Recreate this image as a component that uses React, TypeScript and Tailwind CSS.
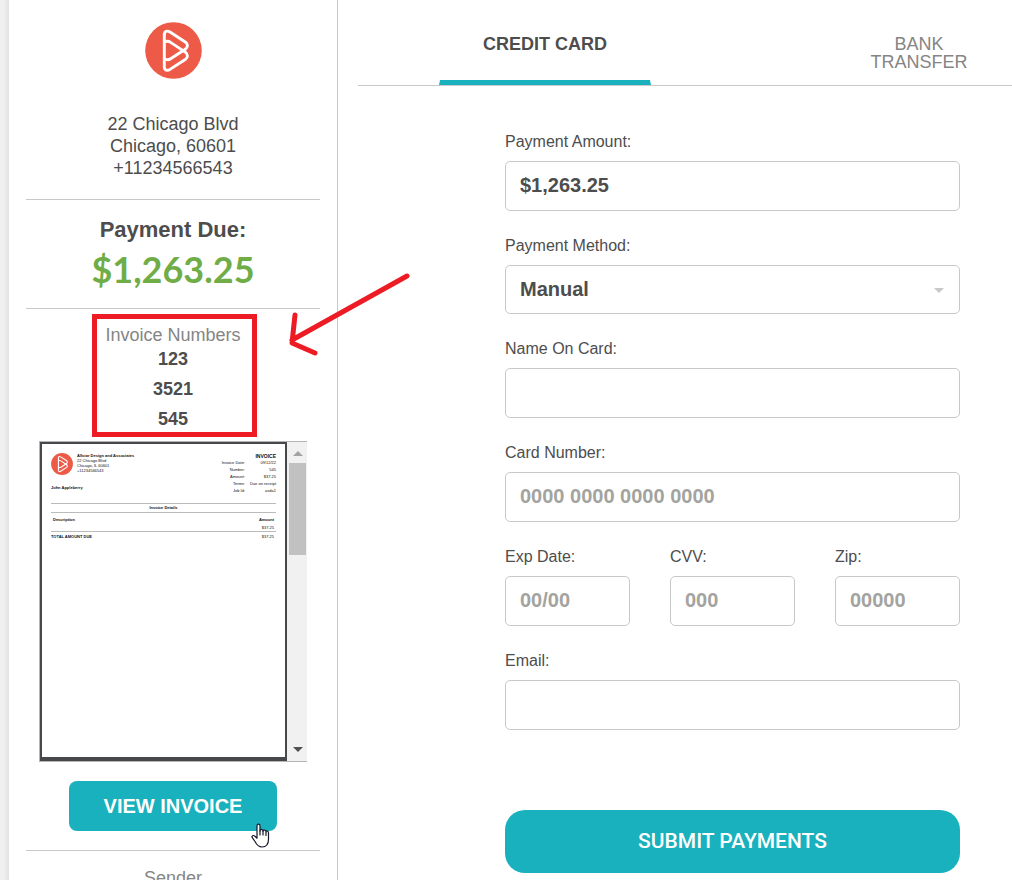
import clsx from 'clsx'

const invoiceNumbers = ['123', '3521', '545']

const invoiceMeta = [
  { label: 'Invoice Date:', value: '09/12/22' },
  { label: 'Number:', value: '545' },
  { label: 'Amount:', value: '$37.25' },
  { label: 'Terms:', value: 'Due on receipt' },
  { label: 'Job Id:', value: 'asda1' },
]

const labelStyles = 'block pt-[1px] pb-[7px] text-base leading-6'

const inputStyles =
  'h-[50px] w-full rounded-[5px] border border-[#c8c8c8] bg-white px-[14px] pb-[2px] text-[20px] font-bold text-[#4d4d4d] outline-none placeholder:text-[#a3a3a0] placeholder:opacity-100'

function Logo({ className }: { className?: string }) {
  return (
    <svg viewBox="0 0 57 57" className={className} aria-hidden="true">
      <circle cx="28.5" cy="28.5" r="28.3" fill="#ed5b48" />
      <g fill="none" stroke="#fff" strokeWidth="2.9" strokeLinejoin="round" strokeLinecap="round">
        <path d="M19.3 12.5 V45 C19.3 48.4 22.2 49.1 25 47.4 L40.6 37.2 C43 35.4 43 32.4 40.6 30.4 L25.6 20.4 C23.5 18.9 21.5 19 19.3 20.400" />
        <path d="M19.3 12.5 C19.3 9 22.2 8.300 25 10 L40.6 20.2 C43 22.2 43 25 40.6 27 L25.6 36.8 C23.5 38.2 21.5 38 19.3 36.6" />
      </g>
    </svg>
  )
}

function Field({
  id,
  label,
  value,
  placeholder,
}: {
  id: string
  label: string
  value?: string
  placeholder?: string
}) {
  return (
    <div className="min-w-0 flex-1">
      <label htmlFor={id} className={labelStyles}>
        {label}
      </label>
      <input id={id} type="text" defaultValue={value} placeholder={placeholder} className={inputStyles} />
    </div>
  )
}

function InvoicePreview() {
  return (
    <div className="mx-[13px] mt-[7px] flex h-[321px] border-y border-l border-[#b5b5b5]">
      {/* Invoice page */}
      <div className="flex-1 border-2 border-b-4 border-[#47484b] bg-white px-[9px] pt-[9px] text-left text-[4px] leading-[5px] text-[#111]">
        <div className="flex justify-between">
          <div className="flex gap-1">
            <Logo className="h-[22px] w-[22px]" />
            <div>
              <p className="font-bold">Allstar Design and Associates</p>
              <p>22 Chicago Blvd</p>
              <p>Chicago, IL 60601</p>
              <p>+11234566543</p>
            </div>
          </div>
          <div className="text-right">
            <p className="text-[5px] leading-[6px] font-bold">INVOICE</p>
            <dl className="grid grid-cols-[auto_auto] gap-x-[5px] leading-[7px]">
              {invoiceMeta.map((row) => (
                <div key={row.label} className="contents">
                  <dt>{row.label}</dt>
                  <dd>{row.value}</dd>
                </div>
              ))}
            </dl>
          </div>
        </div>
        <p className="-mt-[9px] font-bold">John Appleberry</p>
        <p className="mt-[13px] border-y border-[#bbb] py-[2px] text-center leading-[4px] font-bold">Invoice Details</p>
        <table className="mt-1 w-full">
          <thead>
            <tr>
              <th className="pl-[2px] text-left">Description</th>
              <th className="pr-[2px] text-right">Amount</th>
            </tr>
          </thead>
          <tbody>
            <tr className="border-b border-[#bbb]">
              <td />
              <td className="pt-[3px] pr-[2px] pb-[1px] text-right">$37.25</td>
            </tr>
            <tr>
              <td className="pt-[2px] font-bold">TOTAL AMOUNT DUE</td>
              <td className="pt-[2px] pr-[2px] text-right">$37.25</td>
            </tr>
          </tbody>
        </table>
      </div>
      {/* Scrollbar */}
      <div className="flex w-[20px] flex-col items-center bg-[#f1f1f1] pr-[1px] pl-[2px]">
        <svg viewBox="0 0 10 5" className="mt-[9px] mb-[7px] h-[5px] w-[10px]" fill="#a3a3a3" aria-hidden="true">
          <path d="M5 0 10 5H0z" />
        </svg>
        <div className="h-[92px] w-full bg-[#c1c1c1]" />
        <svg viewBox="0 0 10 5" className="mt-auto mb-[9px] h-[5px] w-[10px]" fill="#505050" aria-hidden="true">
          <path d="M0 0h10L5 5z" />
        </svg>
      </div>
    </div>
  )
}

function Sidebar() {
  return (
    <aside className="relative w-[329px] shrink-0 border-r border-[#c8c8c8] bg-white px-[17px] text-center">
      <Logo className="mx-auto mt-[22px] h-[57px] w-[57px]" />
      <address className="mt-[34px] border-b border-[#c8c8c8] pb-[20px] text-[18px] leading-[22px] not-italic">
        22 Chicago Blvd
        <br />
        Chicago, 60601
        <br />
        +11234566543
      </address>
      <div className="border-b border-[#c8c8c8] pt-4 pb-4">
        <h2 className="text-[22px] leading-7 font-bold">Payment Due:</h2>
        <p className="mt-[2px] font-[Lato,sans-serif] text-[36px] leading-[46px] font-bold text-[#70ad47]">$1,263.25</p>
      </div>
      <div className="relative pt-[14px] text-[18px]">
        <h3 className="leading-6 text-[#858585]">Invoice Numbers</h3>
        <ul className="-mt-[3px] leading-[30px] font-bold">
          {invoiceNumbers.map((number) => (
            <li key={number}>{number}</li>
          ))}
        </ul>
        {/* Highlight round the invoice numbers */}
        <div className="absolute top-[5px] left-[66px] h-[123px] w-[165px] border-[5px] border-[#ed1c24]" />
        <svg
          viewBox="0 0 124 88"
          className="absolute -top-[37px] left-[260px] z-10 h-[88px] w-[124px]"
          fill="none"
          stroke="#ed1c24"
          strokeWidth="5"
          strokeLinecap="round"
          strokeLinejoin="round"
          aria-hidden="true"
        >
          <path d="M121 4 6 68M9 43 6 71 29 81" />
        </svg>
      </div>
      <InvoicePreview />
      <div className="relative mx-[43px] mt-[19px] mb-[19px]">
        <button type="button" className="h-[50px] w-full rounded-lg bg-[#19b1bd] text-[20px] font-bold text-white">
          VIEW INVOICE
        </button>
        <svg viewBox="0 0 19 25" className="absolute top-[42px] left-[182px] h-[25px] w-[19px]" aria-hidden="true">
          <path
            d="M6 13V3C6 .6 9 .6 9 3V8C9 5.8 12 6 12 8.2 12 6.5 15 6.6 15 8.8 15 7.5 17.5 7.6 17.5 10V16C17.5 21 15 24 11 24 7 24 5.5 21.5 4 18.5L1.3 14.7C.2 12.8 2.4 11.7 4 13.3L6 15.2z"
            fill="#fff"
            stroke="#16162c"
            strokeWidth="1.2"
            strokeLinejoin="round"
          />
          <path d="M9 7.5V12M12 8V12M15 9V12.5" stroke="#16162c" strokeWidth="1.2" strokeLinecap="round" />
        </svg>
      </div>
      <div className="border-t border-[#c8c8c8] pt-[15px] text-[18px] leading-6 text-[#858585]">Sender</div>
    </aside>
  )
}

const tabs = [
  { name: 'CREDIT CARD', current: true },
  { name: 'BANK TRANSFER', current: false },
]

export default function App() {
  return (
    <div className="flex h-screen overflow-hidden bg-white font-['Liberation_Sans',Arial,sans-serif] text-[#4d4d4d]">
      <div className="w-[9px] shrink-0 bg-linear-to-r from-[#f0f0f0] from-40% to-[#e2e2e2]" />
      <Sidebar />
      <main className="min-w-0 flex-1">
        {/* Tabs */}
        <nav className="ml-5 flex h-[86px] items-stretch justify-between border-b border-[#c8c8c8] pr-[45px] pl-[81px]">
          {tabs.map((tab) => (
            <button
              key={tab.name}
              type="button"
              aria-current={tab.current ? 'page' : undefined}
              className={clsx(
                'flex items-start justify-center border-x border-b-[5px] border-x-transparent pt-[35px] text-[18px] leading-[18px]',
                tab.current
                  ? 'w-[212px] border-b-[#19b1bd] font-bold'
                  : 'w-24 border-b-transparent text-[#858585]',
              )}
            >
              {tab.name}
            </button>
          ))}
        </nav>

        {/* Payment form */}
        <form className="flex flex-col gap-[22px] pt-[43px] pr-[52px] pl-[167px]">
          <Field id="amount" label="Payment Amount:" value="$1,263.25" />
          <div>
            <label htmlFor="method" className={labelStyles}>
              Payment Method:
            </label>
            <div className="relative">
              <select
                id="method"
                defaultValue="Manual"
                className="block h-[49px] w-full appearance-none rounded-[5px] border border-[#c8c8c8] bg-white px-[14px] pb-[2px] text-[20px] font-bold outline-none"
              >
                <option>Manual</option>
              </select>
              <svg
                viewBox="0 0 10 5"
                className="pointer-events-none absolute top-[23px] right-4 h-[5px] w-[10px]"
                fill="#c8c8c8"
                aria-hidden="true"
              >
                <path d="M0 0h10L5 5z" />
              </svg>
            </div>
          </div>
          <Field id="name" label="Name On Card:" />
          <Field id="card" label="Card Number:" placeholder="0000 0000 0000 0000" />
          <div className="flex gap-10">
            <Field id="exp" label="Exp Date:" placeholder="00/00" />
            <Field id="cvv" label="CVV:" placeholder="000" />
            <Field id="zip" label="Zip:" placeholder="00000" />
          </div>
          <Field id="email" label="Email:" />
          <button
            type="submit"
            className="mt-[58px] h-[63px] rounded-[20px] bg-[#19b1bd] font-[Roboto,sans-serif] text-[21px] font-medium text-white"
          >
            SUBMIT PAYMENTS
          </button>
        </form>
      </main>
    </div>
  )
}
